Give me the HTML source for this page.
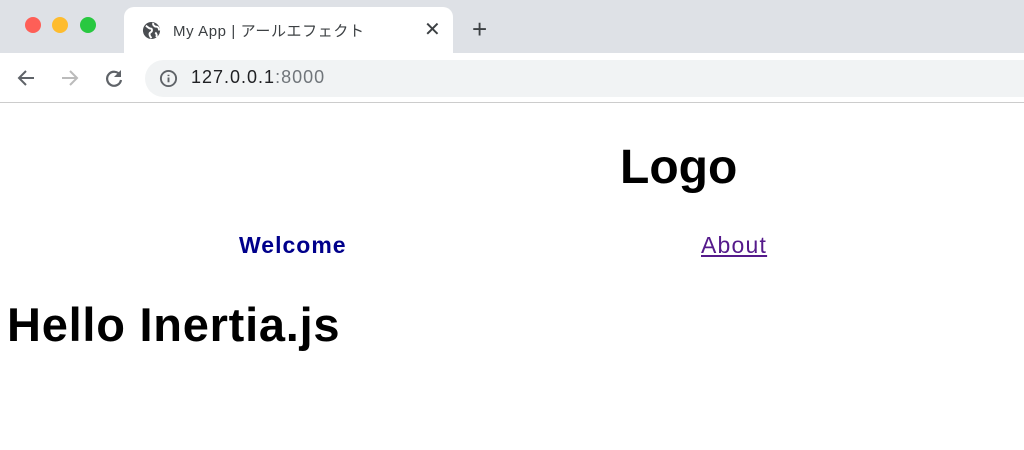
<!DOCTYPE html>
<html><head><meta charset="utf-8"><style>
*{margin:0;padding:0;box-sizing:border-box}
body{width:1024px;height:450px;background:#fff;font-family:"Liberation Sans","Noto Sans CJK JP",sans-serif;position:relative;overflow:hidden}
.top{position:absolute;left:0;top:0;width:1024px;height:53px;background:#dee1e6}
.dot{position:absolute;top:17px;width:16px;height:16px;border-radius:50%}
.tab{position:absolute;left:124px;top:7px;width:329px;height:50px;background:#fff;border-radius:10px 10px 0 0}
.tabt{position:absolute;left:173px;top:20px;font-size:15px;color:#3c4043;letter-spacing:0.6px}
.bar{position:absolute;left:0;top:53px;width:1024px;height:50px;background:#fff;border-bottom:1px solid #ccc}
.url{position:absolute;left:145px;top:60px;width:900px;height:37px;background:#f1f3f4;border-radius:19px}
.urlt{position:absolute;left:191px;top:67px;font-size:18px;color:#202124;letter-spacing:1px}
.abs{position:absolute;white-space:nowrap}
</style></head><body>
<div class="top"></div>
<div class="dot" style="left:25px;background:#fe5f57"></div>
<div class="dot" style="left:52px;background:#febc2e"></div>
<div class="dot" style="left:80px;background:#28c840"></div>
<div class="tab"></div>
<svg class="abs" style="left:142px;top:21px" width="19" height="19" viewBox="0 0 20 20"><circle cx="10" cy="10" r="9" fill="#4a4d51"/><path d="M4 5c2 1 3 3 5 3s2 3 0 4-1 4 1 6M12 2c-1 2 1 4 3 4s3 2 3 4M14 12c1 1 2 3 1 5" stroke="#fff" stroke-width="2" fill="none"/></svg>
<div class="tabt">My App | アールエフェクト</div>
<div class="abs" style="left:424px;top:17px;font-size:20px;color:#3c4043">✕</div>
<div class="abs" style="left:472px;top:14px;font-size:26px;color:#3c4043">+</div>
<div class="bar"></div>
<svg class="abs" style="left:16px;top:68px" width="20" height="20" viewBox="0 0 20 20"><path d="M18 10H3M10 3L3 10l7 7" stroke="#5f6368" stroke-width="2" fill="none"/></svg>
<svg class="abs" style="left:60px;top:68px" width="20" height="20" viewBox="0 0 20 20"><path d="M2 10h15M10 3l7 7-7 7" stroke="#bbb" stroke-width="2" fill="none"/></svg>
<svg class="abs" style="left:104px;top:68px" width="20" height="20" viewBox="0 0 20 20"><path d="M16 7A7 7 0 1 0 17 12" stroke="#5f6368" stroke-width="2.2" fill="none"/><path d="M17 2v7h-7z" fill="#5f6368"/></svg>
<div class="url"></div>
<svg class="abs" style="left:159px;top:69px" width="19" height="19" viewBox="0 0 20 20"><circle cx="10" cy="10" r="8" stroke="#5f6368" stroke-width="2" fill="none"/><path d="M10 9v5M10 6v1.5" stroke="#5f6368" stroke-width="2"/></svg>
<div class="urlt">127.0.0.1<span style="color:#70757a">:8000</span></div>
<div class="abs" style="left:620px;top:140px;font-size:48px;font-weight:bold">Logo</div>
<div class="abs" style="left:239px;top:232px;font-size:23px;font-weight:bold;color:#00008b;letter-spacing:1px">Welcome</div>
<div class="abs" style="left:701px;top:232px;font-size:23px;color:#551a8b;text-decoration:underline;letter-spacing:1.2px">About</div>
<div class="abs" style="left:7px;top:297px;font-size:47px;font-weight:bold;letter-spacing:0.75px">Hello Inertia.js</div>
</body></html>
